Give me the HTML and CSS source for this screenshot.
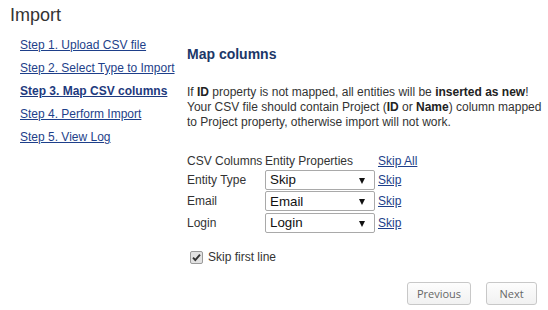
FILE: index.html
```html
<!DOCTYPE html>
<html>
<head>
<meta charset="utf-8">
<link rel="stylesheet" href="styles.css">
</head>
<body>
<h1 class="page-title">Import</h1>
<div class="layout">
  <nav class="steps">
    <a href="#" class="step">Step 1. Upload CSV file</a>
    <a href="#" class="step">Step 2. Select Type to Import</a>
    <a href="#" class="step step-current">Step 3. Map CSV columns</a>
    <a href="#" class="step">Step 4. Perform Import</a>
    <a href="#" class="step">Step 5. View Log</a>
  </nav>
  <main class="content">
    <h2 class="section-title">Map columns</h2>
    <p class="note">If <b>ID</b> property is not mapped, all entities will be <b>inserted as new</b>! Your CSV file should contain Project (<b>ID</b> or <b>Name</b>) column mapped to Project property, otherwise import will not work.</p>
    <table class="map-table">
      <tr class="head-row">
        <td class="col-csv">CSV Columns</td>
        <td class="col-prop">Entity Properties</td>
        <td class="col-skip"><a href="#">Skip All</a></td>
      </tr>
      <tr>
        <td class="col-csv">Entity Type</td>
        <td class="col-prop"><span class="select-wrap"><select class="prop-select"><option>Skip</option></select></span></td>
        <td class="col-skip"><a href="#">Skip</a></td>
      </tr>
      <tr>
        <td class="col-csv">Email</td>
        <td class="col-prop"><span class="select-wrap"><select class="prop-select"><option>Email</option></select></span></td>
        <td class="col-skip"><a href="#">Skip</a></td>
      </tr>
      <tr>
        <td class="col-csv">Login</td>
        <td class="col-prop"><span class="select-wrap"><select class="prop-select"><option>Login</option></select></span></td>
        <td class="col-skip"><a href="#">Skip</a></td>
      </tr>
    </table>
    <label class="skip-line">
      <span class="checkbox"><svg width="11" height="11" viewBox="0 0 11 11"><path d="M2 5.6 L4.3 8 L9 2.6" fill="none" stroke="#333" stroke-width="1.9"/></svg></span>
      Skip first line
    </label>
    <div class="actions">
      <button class="btn btn-prev">Previous</button>
      <button class="btn btn-next">Next</button>
    </div>
  </main>
</div>
</body>
</html>
```

FILE: styles.css
```css
html, body {
  margin: 0;
  padding: 0;
  background: #fff;
}
body {
  font-family: "Liberation Sans", Arial, sans-serif;
  font-size: 12px;
  color: #333;
  width: 548px;
  height: 310px;
  overflow: hidden;
}
.page-title {
  margin: 0;
  padding: 5px 10px 0;
  font-size: 18px;
  font-weight: normal;
  line-height: 21px;
  color: #333;
}
.layout {
  display: flex;
  margin-top: 8px;
}
.steps {
  width: 167px;
  padding-left: 20px;
  display: flex;
  flex-direction: column;
}
.step {
  display: block;
  line-height: 23px;
  color: #1e3f8a;
  text-decoration: underline;
  white-space: nowrap;
}
.step-current {
  font-weight: bold;
  color: #1e3a7e;
}
.content {
  flex: 1;
  min-width: 0;
}
.section-title {
  margin: 12px 0 0;
  font-size: 14px;
  font-weight: bold;
  line-height: 16px;
  color: #1c3768;
}
.note {
  margin: 23px 0 0;
  line-height: 15px;
  color: #333;
}
.note b {
  color: #222;
}
.map-table {
  margin-top: 23px;
  border-collapse: collapse;
}
.map-table td {
  padding: 0.75px 0;
  vertical-align: middle;
  white-space: nowrap;
}
.head-row td {
  padding: 0;
  line-height: 16px;
}
.col-csv {
  width: 78px;
}
.col-prop {
  width: 113px;
}
.col-skip a {
  color: #1e3f8a;
  text-decoration: underline;
}
.select-wrap {
  position: relative;
  display: inline-block;
  vertical-align: middle;
}
.select-wrap::after {
  content: "";
  position: absolute;
  right: 10px;
  top: 8px;
  border-left: 3.5px solid transparent;
  border-right: 3.5px solid transparent;
  border-top: 6px solid #111;
  pointer-events: none;
}
.prop-select {
  appearance: none;
  -webkit-appearance: none;
  display: block;
  width: 110px;
  height: 20px;
  margin: 0;
  padding: 0 0 0 4px;
  border: 1px solid #a9a9a9;
  border-radius: 2px;
  background: #fff;
  font-family: "Liberation Sans", Arial, sans-serif;
  font-size: 13.33px;
  color: #111;
}
.skip-line {
  display: flex;
  align-items: center;
  margin-top: 16px;
  line-height: 15px;
  color: #333;
}
.checkbox {
  display: inline-flex;
  align-items: center;
  justify-content: center;
  width: 11px;
  height: 11px;
  margin: 0 5px 0 3px;
  border: 1px solid #9a9a9a;
  border-radius: 2px;
  background: #e2e2e2;
}
.actions {
  display: flex;
  justify-content: flex-end;
  gap: 15px;
  margin-top: 17px;
  padding-right: 11px;
}
.btn {
  height: 23px;
  padding: 0;
  border: 1px solid #c8c8c8;
  border-radius: 3px;
  background: linear-gradient(#fdfdfd, #f1f1f1);
  font-family: "Open Sans", sans-serif;
  font-size: 11px;
  color: #666;
}
.btn-prev {
  width: 64px;
}
.btn-next {
  width: 51px;
}
```
